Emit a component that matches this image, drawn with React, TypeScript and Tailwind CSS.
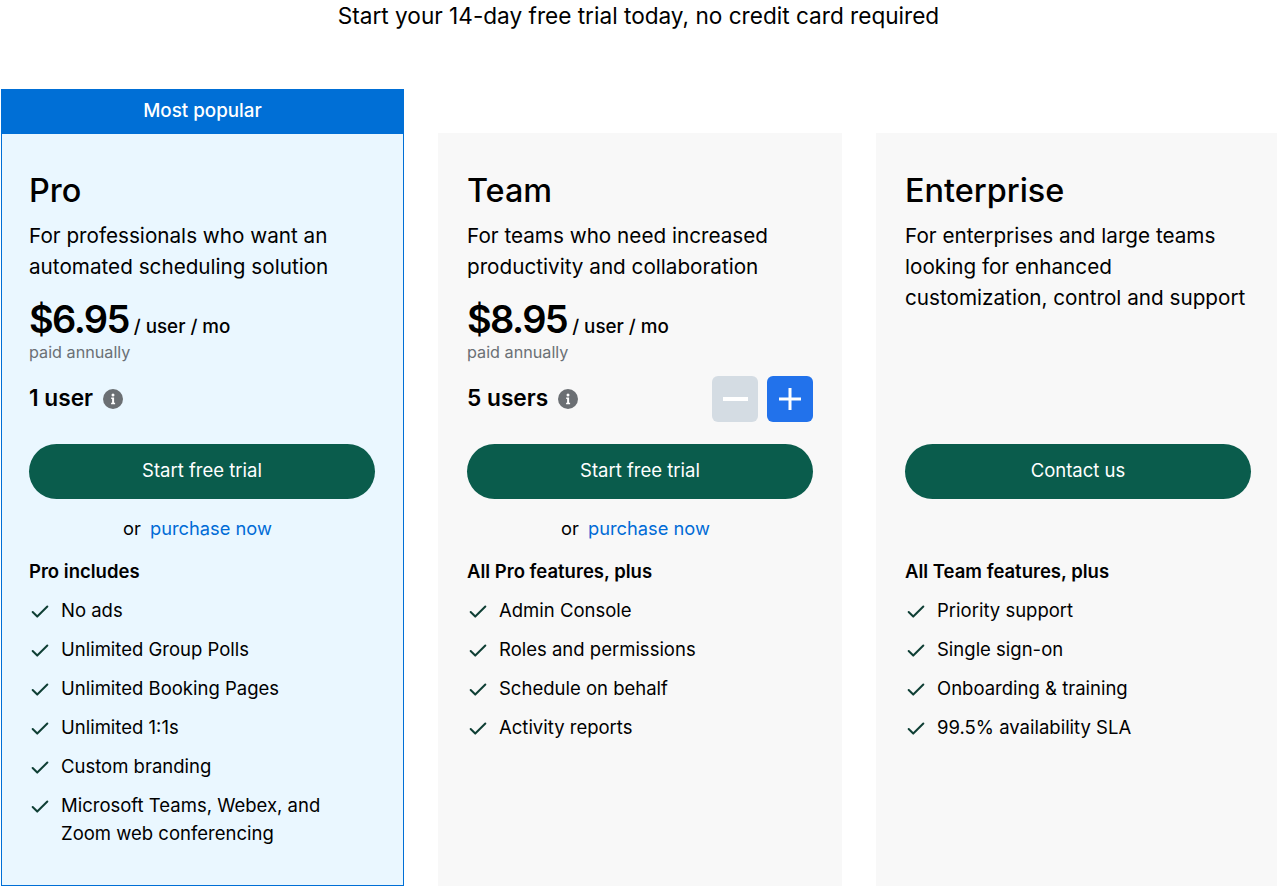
import { Check } from "lucide-react";

type PlanProps = {
  name: string;
  desc: string[];
  price?: string;
  users?: string;
  stepper?: boolean;
  cta: string;
  purchase?: boolean;
  heading: string;
  features: string[];
};

function InfoDot() {
  return (
    <svg width="20" height="20" viewBox="0 0 20 20" className="ml-[10px] shrink-0">
      <circle cx="10" cy="10" r="10" fill="#6b6f73" />
      <circle cx="10" cy="5.9" r="1.5" fill="#fff" />
      <path d="M8.2 8.6h2.9v5.2h1v1.5H8.1v-1.5h1V10.1h-.9z" fill="#fff" />
    </svg>
  );
}

function Plan({ name, desc, price, users, stepper, cta, purchase, heading, features }: PlanProps) {
  return (
    <div className="w-[346px] pt-[37px]">
      <h2 className="text-[32.4px] leading-[40px] font-medium text-black">{name}</h2>
      <div className="mt-[9px] h-[224px]">
        <div className="text-[20.7px] leading-[31px] text-black">
          {desc.map((line) => (
            <div key={line} className="whitespace-nowrap">
              {line}
            </div>
          ))}
        </div>
        {price && (
          <>
            <div className="mt-[14px] flex items-baseline gap-[5px] text-black">
              <span className="text-[38px] leading-[47px] font-semibold tracking-[-1.6px]">{price}</span>
              <span className="text-[18.8px] font-medium">/ user / mo</span>
            </div>
            <div className="text-[16.2px] leading-[18px] text-[#6b7075]">paid annually</div>
            <div className="mt-[15px] flex h-[46px] items-center">
              <span className="pb-[2px] text-[22.7px] font-semibold text-black">{users}</span>
              <InfoDot />
              {stepper && (
                <div className="ml-auto flex gap-[9px]">
                  <button className="flex h-[46px] w-[46px] items-center justify-center rounded-md bg-[#d4dce3]">
                    <svg width="25" height="4" viewBox="0 0 25 4">
                      <rect width="25" height="4" fill="#fff" />
                    </svg>
                  </button>
                  <button className="flex h-[46px] w-[46px] items-center justify-center rounded-md bg-[#2272eb]">
                    <svg width="22" height="22" viewBox="0 0 22 22">
                      <path d="M9.5 0h3v9.5H22v3h-9.5V22h-3v-9.5H0v-3h9.5z" fill="#fff" />
                    </svg>
                  </button>
                </div>
              )}
            </div>
          </>
        )}
      </div>
      <button className="h-[55px] w-full rounded-full bg-[#0a5c4c] pb-px text-[18.5px] text-white">{cta}</button>
      <div className="mt-[15px] h-[28px] pr-[9px] text-center text-[18.3px] leading-[28px] text-black">
        {purchase && (
          <>
            or <a className="ml-[4px] text-[#006bd6]">purchase now</a>
          </>
        )}
      </div>
      <div className="mt-[15px] text-[18.5px] leading-[28px] font-semibold text-black">{heading}</div>
      <ul className="mt-[11px] flex flex-col gap-[11px]">
        {features.map((f) => (
          <li key={f} className="flex text-[18.5px] leading-[28px] text-black">
            <Check size={22} strokeWidth={2.2} className="mt-[5px] mr-[10px] shrink-0 text-[#0f3f35]" />
            <span className="max-w-[280px]">{f}</span>
          </li>
        ))}
      </ul>
    </div>
  );
}

export default function App() {
  return (
    <div className="h-[887px] overflow-hidden bg-white font-['Inter',sans-serif]">
      <p className="h-[89px] pt-px text-center text-[22.6px] leading-[30px] text-black">
        Start your 14-day free trial today, no credit card required
      </p>
      <div className="grid w-[1300px] grid-cols-[403px_404px_404px] gap-x-[34px] pl-px">
        <div className="h-[797px] border border-[#006fd6] bg-[#eaf7ff]">
          <div className="-mx-px -mt-px flex h-[45px] items-center justify-center bg-[#006fd6] pb-px text-[18.8px] font-medium text-white">
            Most popular
          </div>
          <div className="pl-[27px]">
            <Plan
              name="Pro"
              desc={["For professionals who want an", "automated scheduling solution"]}
              price="$6.95"
              users="1 user"
              cta="Start free trial"
              purchase
              heading="Pro includes"
              features={[
                "No ads",
                "Unlimited Group Polls",
                "Unlimited Booking Pages",
                "Unlimited 1:1s",
                "Custom branding",
                "Microsoft Teams, Webex, and Zoom web conferencing",
              ]}
            />
          </div>
        </div>
        <div className="mt-[44px] h-[753px] bg-[#f8f8f8] pt-px pl-[29px]">
          <Plan
            name="Team"
            desc={["For teams who need increased", "productivity and collaboration"]}
            price="$8.95"
            users="5 users"
            stepper
            cta="Start free trial"
            purchase
            heading="All Pro features, plus"
            features={["Admin Console", "Roles and permissions", "Schedule on behalf", "Activity reports"]}
          />
        </div>
        <div className="mt-[44px] h-[753px] bg-[#f8f8f8] pt-px pl-[29px]">
          <Plan
            name="Enterprise"
            desc={["For enterprises and large teams", "looking for enhanced", "customization, control and support"]}
            cta="Contact us"
            heading="All Team features, plus"
            features={["Priority support", "Single sign-on", "Onboarding & training", "99.5% availability SLA"]}
          />
        </div>
      </div>
    </div>
  );
}
